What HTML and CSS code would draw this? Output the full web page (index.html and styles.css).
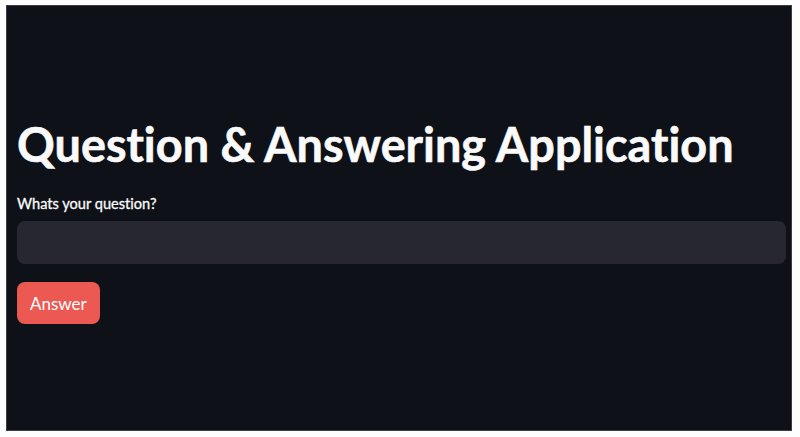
FILE: index.html
```html
<!DOCTYPE html>
<html>
<head>
<meta charset="utf-8">
<link rel="stylesheet" href="styles.css">
</head>
<body>
<div class="frame">
  <main class="content">
    <h1 class="title">Question &amp; Answering Application</h1>
    <label class="label" for="q">Whats your question?</label>
    <input class="input" id="q" type="text">
    <button class="btn">Answer</button>
  </main>
</div>
</body>
</html>
```

FILE: styles.css
```css
html, body {
  margin: 0;
  padding: 0;
  background: #fdfdfd;
}
body {
  width: 800px;
  height: 437px;
  overflow: hidden;
}
.frame {
  box-sizing: border-box;
  width: 786px;
  height: 426px;
  margin: 5px 0 0 6px;
  background: #0e1117;
  border: 1px solid #3b3d42;
}
.content {
  display: flex;
  flex-direction: column;
  align-items: flex-start;
  padding: 102px 6px 0 10px;
  font-family: "Lato", sans-serif;
  font-variant-ligatures: none;
  color: #fafafa;
}
.title {
  margin: 0;
  font-size: 46.8px;
  font-weight: 700;
  line-height: 72px;
  white-space: nowrap;
  -webkit-text-stroke: 0.6px #fafafa;
}
.label {
  margin-top: 14px;
  font-size: 14.6px;
  font-weight: 400;
  line-height: 20px;
  -webkit-text-stroke: 0.3px #fafafa;
}
.input {
  box-sizing: border-box;
  margin-top: 7px;
  width: 769px;
  height: 43px;
  border: none;
  border-radius: 8px;
  background: #262730;
  outline: none;
}
.btn {
  margin-top: 18px;
  height: 42px;
  padding: 0 13px;
  border: none;
  border-radius: 8px;
  background: #ec5953;
  color: #fff;
  font-family: "Lato", sans-serif;
  font-size: 17px;
}
```
